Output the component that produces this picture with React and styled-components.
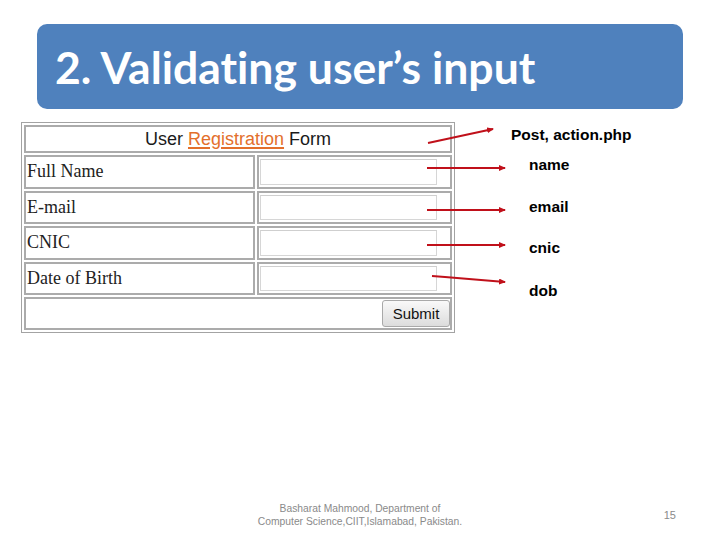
import React from "react";
import styled, { createGlobalStyle } from "styled-components";

const Global = createGlobalStyle`
  html, body { margin: 0; padding: 0; background: #ffffff; }
  #root { width: 720px; height: 540px; }
`;

const Slide = styled.div`
  position: relative;
  width: 720px;
  height: 540px;
  box-sizing: border-box;
  padding-top: 24px;
  display: flex;
  flex-direction: column;
  overflow: hidden;
  background: #ffffff;
`;

const Banner = styled.header`
  margin: 0 37px;
  height: 85px;
  box-sizing: border-box;
  padding-left: 18px;
  background: #4f81bd;
  border-radius: 10px;
  display: flex;
  align-items: center;
`;

const Title = styled.h1`
  margin: 0;
  font-family: Lato, "Open Sans", sans-serif;
  font-weight: 700;
  font-size: 44.5px;
  font-variant-ligatures: none;
  color: #ffffff;
  white-space: nowrap;
`;

const Content = styled.main`
  display: flex;
  align-items: flex-start;
  margin-top: 13px;
  padding-left: 21px;
`;

const FormTable = styled.table`
  border: 1px solid #a3a3a3;
  border-collapse: separate;
  border-spacing: 2px;
  width: 434px;
  flex: none;
`;

const HeaderCell = styled.td`
  border: 2px solid #ababab;
  padding: 0;
  height: 24px;
  line-height: 24px;
  text-align: center;
  font-family: "Liberation Sans", Arial, sans-serif;
  font-size: 18px;
  color: #1a1a1a;
`;

const Accent = styled.span`
  color: #e36f2c;
  text-decoration: underline;
  text-decoration-thickness: 2px;
  text-underline-offset: 2px;
`;

const LabelCell = styled.td`
  box-sizing: border-box;
  width: 231px;
  border: 2px solid #ababab;
  padding: 2px 1px;
  vertical-align: middle;
  font-family: "Liberation Serif", "Times New Roman", serif;
  font-size: 18px;
  color: #222222;
  white-space: nowrap;
`;

const InputCell = styled.td`
  box-sizing: border-box;
  width: 195px;
  border: 2px solid #ababab;
  padding: 2px 1px;
  vertical-align: middle;
`;

const TextInput = styled.input`
  display: block;
  width: 177px;
  height: 25.5px;
  box-sizing: border-box;
  margin: 0;
  border: 1px solid #d6d6d6;
  border-top-color: #cfcfcf;
  background: #ffffff;
  outline: none;
`;

const SubmitCell = styled.td`
  border: 2px solid #ababab;
  padding: 1px 0;
  text-align: right;
`;

const SubmitButton = styled.button`
  width: 68px;
  height: 27px;
  padding: 0;
  margin: 0;
  font-family: "Liberation Sans", Arial, sans-serif;
  font-size: 15px;
  color: #111111;
  border: 1px solid #a9a9a9;
  border-radius: 3px;
  background: linear-gradient(#f9f9f9, #dcdcdc);
`;

const Notes = styled.div`
  display: flex;
  flex-direction: column;
  margin-left: 56px;
`;

const Note = styled.div`
  margin-top: ${(p) => p.$top}px;
  padding-left: ${(p) => p.$indent || 0}px;
  font-family: "Liberation Sans", Arial, sans-serif;
  font-weight: 700;
  font-size: 15.5px;
  line-height: 15px;
  color: #000000;
  white-space: nowrap;
`;

const Footer = styled.footer`
  margin-top: auto;
  margin-bottom: 12px;
  display: grid;
  grid-template-columns: 1fr auto 1fr;
  align-items: center;
`;

const Credit = styled.div`
  grid-column: 2;
  font-family: "Liberation Sans", Arial, sans-serif;
  font-size: 10.3px;
  line-height: 13px;
  color: #8a8a8a;
  text-align: center;
`;

const PageNum = styled.div`
  grid-column: 3;
  justify-self: end;
  margin-right: 44px;
  font-family: "Liberation Sans", Arial, sans-serif;
  font-size: 11px;
  color: #8a8a8a;
`;

const ArrowLayer = styled.svg`
  position: absolute;
  left: 0;
  top: 0;
  width: 720px;
  height: 540px;
  pointer-events: none;
`;

const RED = "#c0101a";

const arrows = [
  "M428 143 L493 129",
  "M427 168 L505 168",
  "M427 210 L505 210",
  "M427 245 L505 245",
  "M432 276 L445 277 L505 282",
];

const fields = ["Full Name", "E-mail", "CNIC", "Date of Birth"];

const notes = [
  { text: "Post, action.php", top: 5, indent: 0 },
  { text: "name", top: 15, indent: 18 },
  { text: "email", top: 27, indent: 18 },
  { text: "cnic", top: 26, indent: 18 },
  { text: "dob", top: 28, indent: 18 },
];

export default function App() {
  return (
    <>
      <Global />
      <Slide>
        <Banner>
          <Title>2. Validating user’s input</Title>
        </Banner>
        <Content>
          <FormTable>
            <tbody>
              <tr>
                <HeaderCell colSpan={2}>
                  User <Accent>Registration</Accent> Form
                </HeaderCell>
              </tr>
              {fields.map((f) => (
                <tr key={f}>
                  <LabelCell>{f}</LabelCell>
                  <InputCell>
                    <TextInput type="text" />
                  </InputCell>
                </tr>
              ))}
              <tr>
                <SubmitCell colSpan={2}>
                  <SubmitButton type="button">Submit</SubmitButton>
                </SubmitCell>
              </tr>
            </tbody>
          </FormTable>
          <Notes>
            {notes.map((n) => (
              <Note key={n.text} $top={n.top} $indent={n.indent}>
                {n.text}
              </Note>
            ))}
          </Notes>
        </Content>
        <Footer>
          <Credit>
            Basharat Mahmood, Department of
            <br />
            Computer Science,CIIT,Islamabad, Pakistan.
          </Credit>
          <PageNum>15</PageNum>
        </Footer>
        <ArrowLayer viewBox="0 0 720 540">
          <defs>
            <marker
              id="ah"
              markerWidth="7"
              markerHeight="6"
              refX="6"
              refY="3"
              orient="auto"
              markerUnits="userSpaceOnUse"
            >
              <path d="M0 0 L7 3 L0 6 Z" fill={RED} />
            </marker>
          </defs>
          {arrows.map((d) => (
            <path
              key={d}
              d={d}
              fill="none"
              stroke={RED}
              strokeWidth="2"
              markerEnd="url(#ah)"
            />
          ))}
        </ArrowLayer>
      </Slide>
    </>
  );
}
